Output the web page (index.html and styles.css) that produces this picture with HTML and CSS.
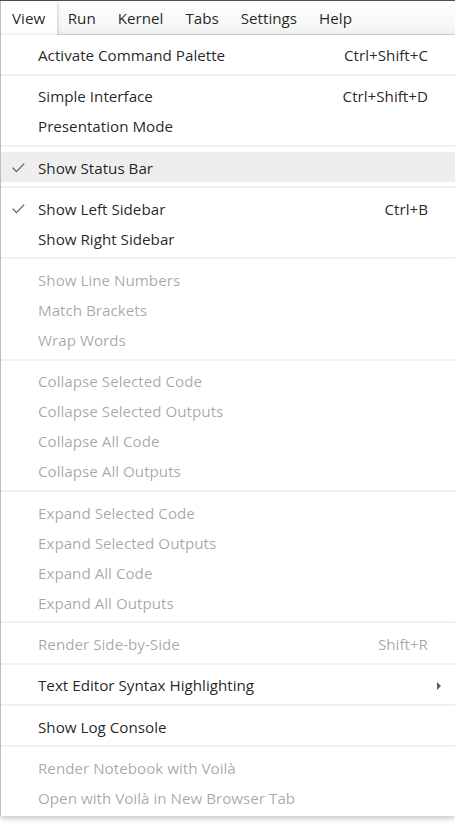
FILE: index.html
```html
<!DOCTYPE html>
<html>
<head>
<meta charset="utf-8">
<link rel="stylesheet" href="styles.css">
</head>
<body>
<div class="topline"></div>
<nav class="menubar">
  <div class="tab active">View</div>
  <div class="tab">Run</div>
  <div class="tab">Kernel</div>
  <div class="tab">Tabs</div>
  <div class="tab">Settings</div>
  <div class="tab">Help</div>
</nav>
<div class="panel">
  <div class="row"><span class="icon"></span><span class="label">Activate Command Palette</span><span class="key">Ctrl+Shift+C</span><span class="sub"></span></div>
  <div class="sep"></div>
  <div class="row"><span class="icon"></span><span class="label">Simple Interface</span><span class="key">Ctrl+Shift+D</span><span class="sub"></span></div>
  <div class="row"><span class="icon"></span><span class="label">Presentation Mode</span><span class="sub"></span></div>
  <div class="sep"></div>
  <div class="row hover"><span class="icon"><svg class="check" width="13" height="10" viewBox="0 0 13 10"><path d="M0.6 4.6 L4.4 8.6 L12.2 0.6" fill="none" stroke="#616161" stroke-width="1.3"/></svg></span><span class="label">Show Status Bar</span><span class="sub"></span></div>
  <div class="sep"></div>
  <div class="row"><span class="icon"><svg class="check" width="13" height="10" viewBox="0 0 13 10"><path d="M0.6 4.6 L4.4 8.6 L12.2 0.6" fill="none" stroke="#616161" stroke-width="1.3"/></svg></span><span class="label">Show Left Sidebar</span><span class="key">Ctrl+B</span><span class="sub"></span></div>
  <div class="row"><span class="icon"></span><span class="label">Show Right Sidebar</span><span class="sub"></span></div>
  <div class="sep"></div>
  <div class="row off"><span class="icon"></span><span class="label">Show Line Numbers</span><span class="sub"></span></div>
  <div class="row off"><span class="icon"></span><span class="label">Match Brackets</span><span class="sub"></span></div>
  <div class="row off"><span class="icon"></span><span class="label">Wrap Words</span><span class="sub"></span></div>
  <div class="sep"></div>
  <div class="row off"><span class="icon"></span><span class="label">Collapse Selected Code</span><span class="sub"></span></div>
  <div class="row off"><span class="icon"></span><span class="label">Collapse Selected Outputs</span><span class="sub"></span></div>
  <div class="row off"><span class="icon"></span><span class="label">Collapse All Code</span><span class="sub"></span></div>
  <div class="row off"><span class="icon"></span><span class="label">Collapse All Outputs</span><span class="sub"></span></div>
  <div class="sep"></div>
  <div class="row off"><span class="icon"></span><span class="label">Expand Selected Code</span><span class="sub"></span></div>
  <div class="row off"><span class="icon"></span><span class="label">Expand Selected Outputs</span><span class="sub"></span></div>
  <div class="row off"><span class="icon"></span><span class="label">Expand All Code</span><span class="sub"></span></div>
  <div class="row off"><span class="icon"></span><span class="label">Expand All Outputs</span><span class="sub"></span></div>
  <div class="sep"></div>
  <div class="row off"><span class="icon"></span><span class="label">Render Side-by-Side</span><span class="key">Shift+R</span><span class="sub"></span></div>
  <div class="sep"></div>
  <div class="row"><span class="icon"></span><span class="label">Text Editor Syntax Highlighting</span><span class="sub"><span class="arrow"></span></span></div>
  <div class="sep"></div>
  <div class="row"><span class="icon"></span><span class="label">Show Log Console</span><span class="sub"></span></div>
  <div class="sep"></div>
  <div class="row off"><span class="icon"></span><span class="label">Render Notebook with Voilà</span><span class="sub"></span></div>
  <div class="row off"><span class="icon"></span><span class="label">Open with Voilà in New Browser Tab</span><span class="sub"></span></div>
</div>
</body>
</html>
```
FILE: styles.css
```css
html, body {
  margin: 0;
  padding: 0;
  background: #ffffff;
}
body {
  width: 455px;
  height: 824px;
  overflow: hidden;
  font-family: "Open Sans", "Noto Sans", sans-serif;
  font-size: 15.2px;
  color: rgba(0, 0, 0, 0.87);
}
.topline {
  height: 1px;
  background: #4f4f4f;
}
.menubar {
  display: flex;
  height: 33px;
  background: linear-gradient(#ffffff, #f3f3f3);
  border-bottom: 1px solid #d9d9d9;
  box-shadow: 0 1px 1px rgba(0, 0, 0, 0.06);
  position: relative;
  z-index: 1;
}
.tab {
  display: flex;
  align-items: center;
  padding: 1px 11px 0;
  box-sizing: border-box;
  height: 33px;
  font-size: 15.2px;
  color: rgba(0, 0, 0, 0.87);
}
.tab.active {
  background: #ffffff;
  border-left: 1px solid #bdbdbd;
  padding: 0 11.5px 0 11px;
  height: 34px;
  margin-bottom: -1px;
  box-shadow: 2px 0 3px -1px rgba(0, 0, 0, 0.18);
  position: relative;
  z-index: 3;
}
.panel {
  position: relative;
  z-index: 2;
  width: 454px;
  background: #ffffff;
  border-left: 1px solid #bdbdbd;
  padding: 4px 0;
  box-shadow: 0 2px 6px rgba(0, 0, 0, 0.25);
}
.row {
  display: flex;
  align-items: center;
  height: 30px;
  font-size: 15.2px;
}
.row.hover {
  background: #eeeeee;
}
.row.off {
  color: rgba(0, 0, 0, 0.36);
}
.label, .key {
  padding-top: 2px;
}
.icon {
  width: 37px;
  height: 30px;
  display: flex;
  align-items: center;
  padding-left: 11px;
  box-sizing: border-box;
}
.check {
  display: block;
  margin-top: 3px;
}
.label {
  flex: 1;
  white-space: nowrap;
}
.key {
  white-space: nowrap;
}
.sub {
  width: 27px;
  height: 30px;
  display: flex;
  align-items: center;
}
.arrow {
  display: block;
  margin-left: 9px;
  margin-top: 3px;
  width: 0;
  height: 0;
  border-top: 4px solid transparent;
  border-bottom: 4px solid transparent;
  border-left: 4px solid #616161;
}
.sep {
  height: 2px;
  background: #f0f0f0;
  margin: 4.6px 0 4.7px;
}
```
